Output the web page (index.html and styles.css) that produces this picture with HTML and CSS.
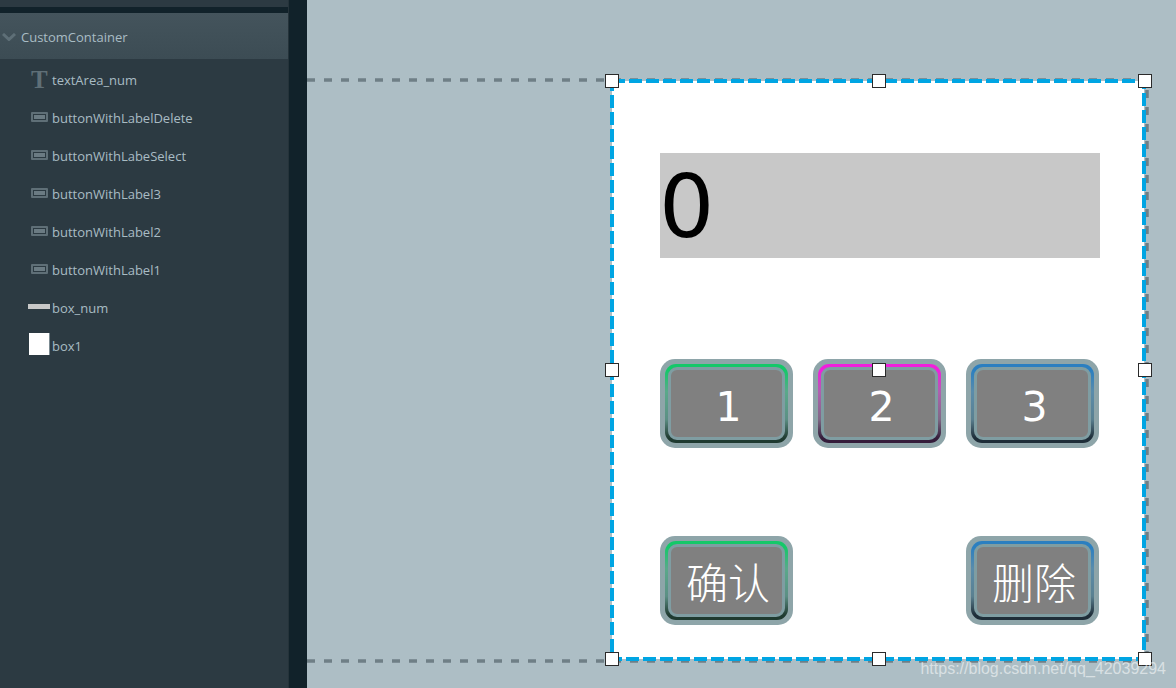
FILE: index.html
```html
<!DOCTYPE html>
<html lang="zh">
<head>
    <meta charset="UTF-8">
    <title>CustomContainer</title>
    <link rel="stylesheet" href="styles.css">
</head>
<body>
    <div class="sidebar">
        <div class="sidebar-top"></div>
        <div class="tree-header">
            <svg class="chevron" width="14" height="8" viewBox="0 0 14 8"><path d="M1 1l6 5.500L13 1" fill="none" stroke="#5e6f77" stroke-width="3"/></svg>
            <span>CustomContainer</span>
        </div>
        <ul class="tree">
            <li><span class="tree-icon icon-text">T</span>textArea_num</li>
            <li><span class="tree-icon"><span class="icon-button"></span></span>buttonWithLabelDelete</li>
            <li><span class="tree-icon"><span class="icon-button"></span></span>buttonWithLabeSelect</li>
            <li><span class="tree-icon"><span class="icon-button"></span></span>buttonWithLabel3</li>
            <li><span class="tree-icon"><span class="icon-button"></span></span>buttonWithLabel2</li>
            <li><span class="tree-icon"><span class="icon-button"></span></span>buttonWithLabel1</li>
            <li><span class="tree-icon"><span class="icon-line"></span></span>box_num</li>
            <li><span class="tree-icon"><span class="icon-box"></span></span>box1</li>
        </ul>
    </div>
    <div class="divider"></div>
    <div class="canvas">
        <div class="widget">
            <div class="display">0</div>
            <div class="btn-row row-first">
                <div class="btn btn-green">
                    <div class="btn-art"><div class="btn-glow"><div class="btn-face"></div></div></div>
                    <div class="btn-label btn-digit">1</div>
                </div>
                <div class="btn btn-pink">
                    <div class="btn-art"><div class="btn-glow"><div class="btn-face"></div></div></div>
                    <div class="btn-label btn-digit">2</div>
                </div>
                <div class="btn btn-blue">
                    <div class="btn-art"><div class="btn-glow"><div class="btn-face"></div></div></div>
                    <div class="btn-label btn-digit">3</div>
                </div>
            </div>
            <div class="btn-row row-second">
                <div class="btn btn-green">
                    <div class="btn-art"><div class="btn-glow"><div class="btn-face"></div></div></div>
                    <div class="btn-label">确认</div>
                </div>
                <div class="btn btn-blue">
                    <div class="btn-art"><div class="btn-glow"><div class="btn-face"></div></div></div>
                    <div class="btn-label">删除</div>
                </div>
            </div>
        </div>

        <!-- artboard and selection outlines -->
        <svg class="outlines" width="869" height="688" viewBox="0 0 869 688">
            <path d="M0 80H840V661M0 661H840" fill="none" stroke="#6f7f86" stroke-width="3.500" stroke-dasharray="8 9"/>
            <path d="M305 81H837V659H305V81" fill="none" stroke="#00a5e3" stroke-width="4" stroke-dasharray="13 4"/>
        </svg>

        <div class="selection">
            <span class="handle h-tl"></span>
            <span class="handle h-tc"></span>
            <span class="handle h-tr"></span>
            <span class="handle h-ml"></span>
            <span class="handle h-mc"></span>
            <span class="handle h-mr"></span>
            <span class="handle h-bl"></span>
            <span class="handle h-bc"></span>
            <span class="handle h-br"></span>
        </div>

        <div class="watermark">https://blog.csdn.net/qq_42039294</div>
    </div>
</body>
</html>
```

FILE: styles.css
```css
* {
    box-sizing: border-box;
    margin: 0;
    padding: 0;
}
body {
    width: 1176px;
    height: 688px;
    display: flex;
    overflow: hidden;
    background-color: #adbec5;
    font-family: 'Open Sans', 'Liberation Sans', sans-serif;
}

/* left panel */
.sidebar {
    flex: 0 0 289px;
    background-color: #2c3a42;
    border-right: 1px solid #25333a;
}
.sidebar-top {
    height: 13px;
    border-bottom: 6px solid #11222a;
}
.tree-header {
    height: 46px;
    display: flex;
    align-items: center;
    gap: 5px;
    padding: 2px 0 0 2px;
    background: linear-gradient(#44545c, #3c4c54);
    color: #a9bcc4;
    font-size: 13px;
}
.tree {
    list-style: none;
    padding-top: 2px;
}
.tree li {
    height: 38px;
    display: flex;
    align-items: center;
    padding-left: 28px;
    color: #a9bcc4;
    font-size: 13px;
}
.tree-icon {
    flex: 0 0 24px;
    display: flex;
    align-items: center;
}
.icon-text {
    padding-left: 3px;
    font-family: 'Liberation Serif', serif;
    font-weight: bold;
    font-size: 25px;
    line-height: 20px;
    color: #5f6f77;
}
.icon-button {
    display: block;
    width: 17px;
    height: 10px;
    margin: -2px 0 0 3px;
    border: 2px solid #5f6f77;
    border-radius: 1px;
    background-color: #6b7b83;
    box-shadow: inset 0 0 0 1px #2c3a42;
}
.icon-line {
    display: block;
    width: 22px;
    height: 5px;
    margin-top: -4px;
    background-color: #c8c8c8;
}
.icon-box {
    display: block;
    width: 21px;
    height: 22px;
    margin: -4px 0 0 1px;
    background-color: #ffffff;
    border-right: 1px solid #7b8a91;
}

.divider {
    flex: 0 0 18px;
    background-color: #11222a;
}

/* canvas */
.canvas {
    flex: 1;
    position: relative;
}
.widget {
    position: absolute;
    left: 305px;
    top: 81px;
    width: 532px;
    height: 578px;
    padding: 72px 0 0 48px;
    background-color: #ffffff;
}
.display {
    width: 440px;
    height: 105px;
    padding-top: 4px;
    background-color: #c8c8c8;
    color: #000000;
    font-family: 'DejaVu Sans', sans-serif;
    font-size: 87px;
    line-height: 101px;
    text-indent: -1px;
}
.btn-row {
    display: flex;
    width: 439px;
    justify-content: space-between;
}
.row-first {
    margin-top: 101px;
}
.row-second {
    margin-top: 88px;
}
.btn {
    position: relative;
    width: 133px;
    height: 89px;
}
/* the button skin is a scaled bitmap in the original, so it is a little soft */
.btn-art {
    height: 100%;
    padding: 5px;
    border-radius: 15px;
    background-color: #8ea5a9;
    filter: blur(0.7px);
}
.btn-glow {
    height: 100%;
    padding: 3px;
    border-radius: 11px;
}
.btn-green .btn-glow {
    background: linear-gradient(#14c869 0, #14c869 8%, #5aa98a 35%, #5c8f84 70%, #1f3a30 94%);
}
.btn-pink .btn-glow {
    background: linear-gradient(#f01fdc 0, #f01fdc 8%, #b060b0 35%, #7f6a86 70%, #341c3a 94%);
}
.btn-blue .btn-glow {
    background: linear-gradient(#2b7fc0 0, #2b7fc0 8%, #5a8cab 35%, #5a8090 70%, #1e2d38 94%);
}
.btn-face {
    height: 100%;
    border: 3px solid #7f9da2;
    border-radius: 9px;
    background-color: #808080;
}
.btn-label {
    position: absolute;
    top: 0;
    left: 0;
    width: 100%;
    height: 100%;
    display: flex;
    align-items: center;
    justify-content: center;
    padding-left: 3px;
    color: #ffffff;
    font-family: 'Noto Sans CJK SC', sans-serif;
    font-size: 42px;
    font-weight: 300;
}
.btn-digit {
    padding: 6px 0 0 4px;
    font-family: 'DejaVu Sans', sans-serif;
    font-size: 41px;
    font-weight: 400;
}

.outlines {
    position: absolute;
    left: 0;
    top: 0;
}

/* resize handles */
.selection {
    position: absolute;
    left: 305px;
    top: 81px;
    width: 533px;
    height: 578px;
}
.handle {
    position: absolute;
    width: 14px;
    height: 14px;
    margin: -7px 0 0 -7px;
    background-color: #ffffff;
    border: 1.500px solid #2a2a2a;
}
.h-tl { left: 0; top: 0; }
.h-tc { left: 50%; top: 0; }
.h-tr { left: 100%; top: 0; }
.h-ml { left: 0; top: 50%; }
.h-mc { left: 50%; top: 50%; }
.h-mr { left: 100%; top: 50%; }
.h-bl { left: 0; top: 100%; }
.h-bc { left: 50%; top: 100%; }
.h-br { left: 100%; top: 100%; }

.watermark {
    position: absolute;
    right: 10px;
    top: 660px;
    color: rgba(255, 255, 255, 0.55);
    font-family: 'Liberation Sans', sans-serif;
    font-size: 16px;
    line-height: 18px;
}
```
